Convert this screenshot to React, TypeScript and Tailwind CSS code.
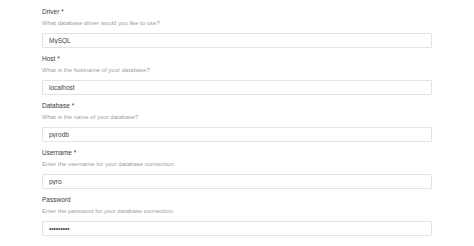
const fields = [
  {
    label: 'Driver',
    required: true,
    help: 'What database driver would you like to use?',
    value: 'MySQL',
    type: 'text',
  },
  {
    label: 'Host',
    required: true,
    help: 'What is the hostname of your database?',
    value: 'localhost',
    type: 'text',
  },
  {
    label: 'Database',
    required: true,
    help: 'What is the name of your database?',
    value: 'pyrodb',
    type: 'text',
  },
  {
    label: 'Username',
    required: true,
    help: 'Enter the username for your database connection.',
    value: 'pyro',
    type: 'text',
  },
  {
    label: 'Password',
    required: false,
    help: 'Enter the password for your database connection.',
    value: 'secret123',
    type: 'password',
  },
]

export default function App() {
  return (
    <div className="min-h-[246px] bg-white pt-[7px] pl-[42px] font-['Liberation_Sans',Arial,sans-serif]">
      <div className="flex w-[390px] flex-col">
        {fields.map((field) => (
          <div key={field.label} className="flex flex-col pb-[6px]">
            <label className="h-[10px] text-[6.5px] leading-[10px] text-[#3a3a3a]">
              {field.label}
              {field.required && ' *'}
            </label>
            <p className="mt-[1px] h-[10px] text-[6px] leading-[10px] text-[#a0a0a0]">
              {field.help}
            </p>
            <input
              type={field.type}
              defaultValue={field.value}
              readOnly
              className="mt-[5px] h-[15px] w-full rounded-[1px] border border-[#e3e3e3] bg-white px-[6px] text-[6.5px] text-[#444] outline-none"
            />
          </div>
        ))}
      </div>
    </div>
  )
}
